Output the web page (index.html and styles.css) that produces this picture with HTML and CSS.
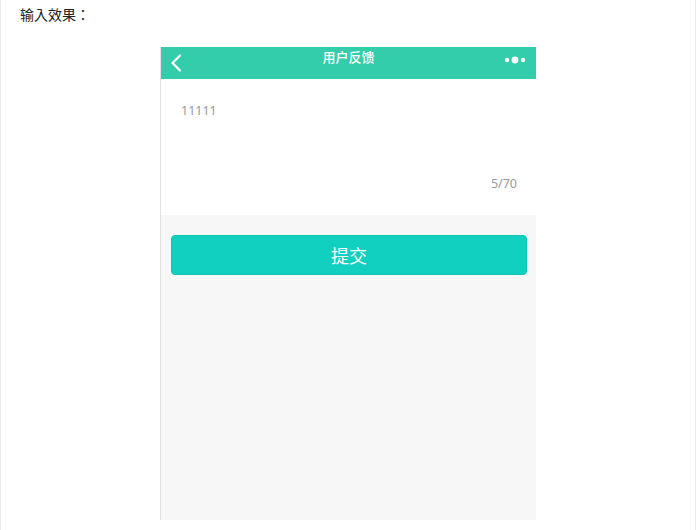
FILE: index.html
```html
<!DOCTYPE html>
<html>
<head>
<meta charset="utf-8">
<link rel="stylesheet" href="styles.css">
</head>
<body>
<div class="page">
  <p class="caption">输入效果：</p>
  <div class="phone">
    <div class="navbar">
      <svg class="back" width="12" height="18" viewBox="0 0 12 18"><path d="M10 1.5 L2.5 9 L10 16.5" fill="none" stroke="#fff" stroke-width="2.2" stroke-linecap="round" stroke-linejoin="round"/></svg>
      <span class="title">用户反馈</span>
      <svg class="more" width="22" height="8" viewBox="0 0 22 8"><circle cx="3" cy="4" r="2.2" fill="#fff"/><circle cx="11" cy="4" r="3.4" fill="#fff"/><circle cx="19" cy="4" r="2.2" fill="#fff"/></svg>
    </div>
    <div class="input-area">
      <div class="input-text">11111</div>
      <div class="counter">5/70</div>
    </div>
    <div class="body-area">
      <div class="submit">提交</div>
    </div>
  </div>
</div>
</body>
</html>
```
FILE: styles.css
```css
html, body {
  margin: 0;
  padding: 0;
  background: #fff;
}
.page {
  width: 694px;
  height: 530px;
  border-left: 1px solid #ececec;
  border-right: 1px solid #ececec;
  font-family: "Microsoft YaHei", "Noto Sans CJK SC", "Liberation Sans", sans-serif;
}
.caption {
  margin: 0;
  padding: 4px 0 0 19px;
  height: 47px;
  box-sizing: border-box;
  font-family: "Noto Sans CJK JP", "Noto Sans CJK SC", sans-serif;
  font-size: 14px;
  line-height: 20px;
  color: #222;
}
.phone {
  margin-left: 159px;
  width: 376px;
  height: 473px;
  border-left: 1px solid #e2e2e2;
  box-sizing: border-box;
  display: flex;
  flex-direction: column;
}
.navbar {
  height: 32px;
  background: #33cdac;
  display: flex;
  align-items: center;
  justify-content: space-between;
  padding: 0 10px 0 9px;
  position: relative;
}
.title {
  position: absolute;
  left: 0;
  right: 0;
  top: 0;
  text-align: center;
  font-size: 13px;
  line-height: 20px;
  font-weight: 500;
  color: #fff;
}
.more {
  margin-top: -6px;
}
.input-area {
  height: 136px;
  background: #fff;
  display: flex;
  flex-direction: column;
  justify-content: space-between;
  padding: 23px 19px 22px 20px;
  box-sizing: border-box;
  font-family: "Microsoft YaHei", "Noto Sans", "Liberation Sans", sans-serif;
  font-size: 12.5px;
  line-height: 18px;
  color: #999;
}
.counter {
  text-align: right;
}
.body-area {
  flex: 1;
  background: #f7f7f7;
  padding: 20px 9px 0 10px;
}
.submit {
  height: 40px;
  box-sizing: border-box;
  border: 1px solid #10c4b2;
  border-radius: 4px;
  background: #11d0bf;
  color: #fff;
  font-size: 18px;
  line-height: 38px;
  text-align: center;
}
```
